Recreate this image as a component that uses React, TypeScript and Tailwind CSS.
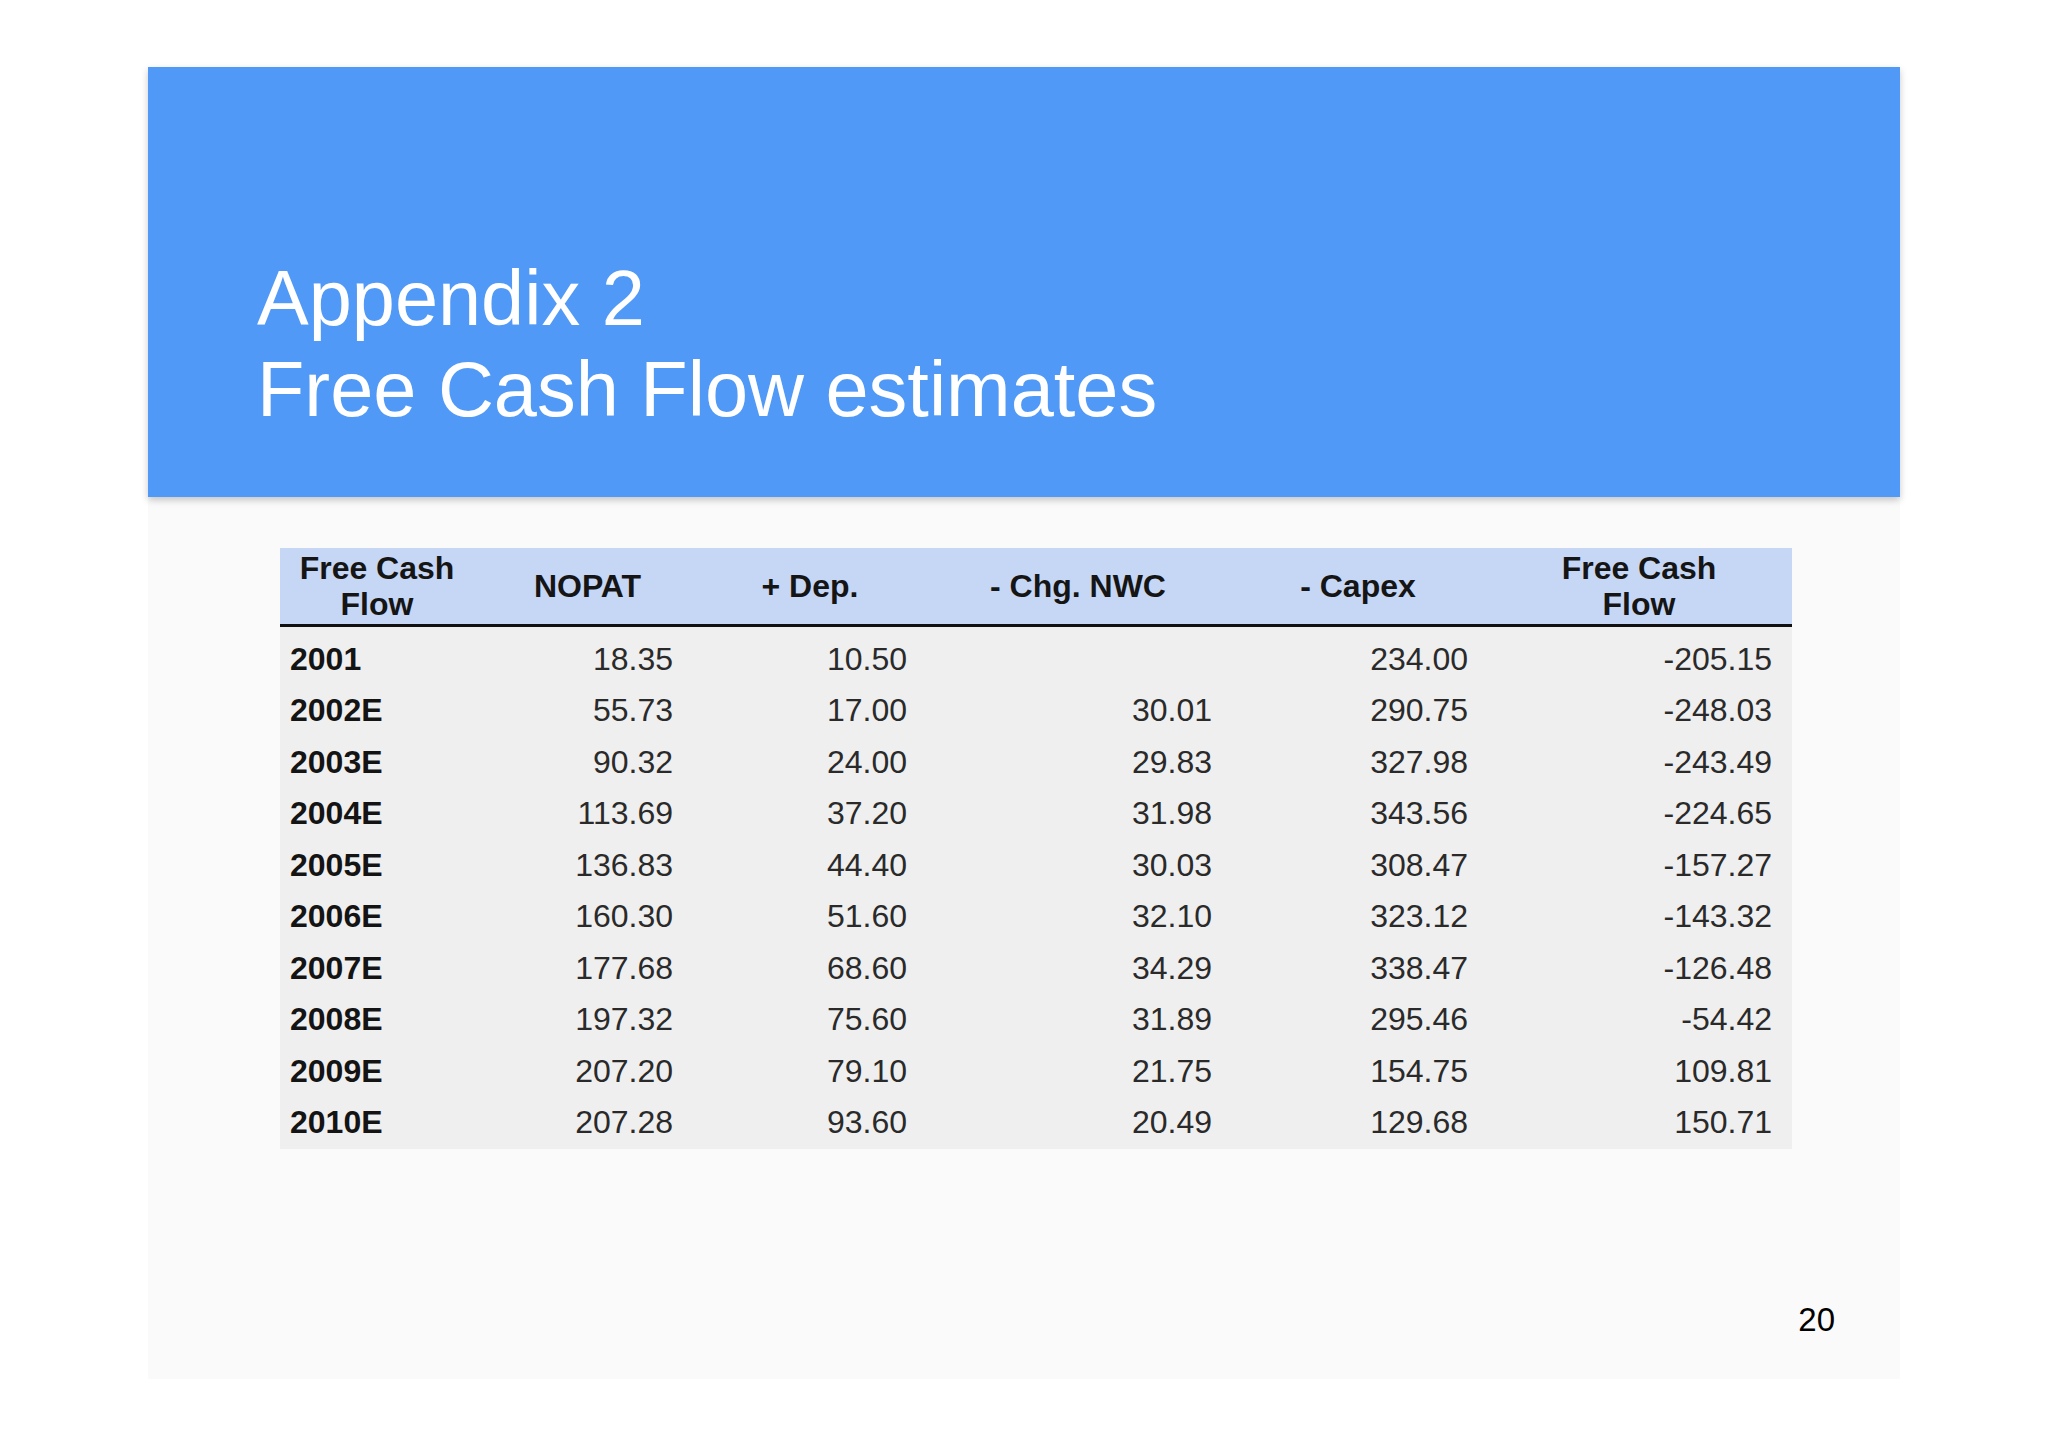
import React from "react";

type Row = [string, string, string, string, string, string];

const rows: Row[] = [
  ["2001", "18.35", "10.50", "", "234.00", "-205.15"],
  ["2002E", "55.73", "17.00", "30.01", "290.75", "-248.03"],
  ["2003E", "90.32", "24.00", "29.83", "327.98", "-243.49"],
  ["2004E", "113.69", "37.20", "31.98", "343.56", "-224.65"],
  ["2005E", "136.83", "44.40", "30.03", "308.47", "-157.27"],
  ["2006E", "160.30", "51.60", "32.10", "323.12", "-143.32"],
  ["2007E", "177.68", "68.60", "34.29", "338.47", "-126.48"],
  ["2008E", "197.32", "75.60", "31.89", "295.46", "-54.42"],
  ["2009E", "207.20", "79.10", "21.75", "154.75", "109.81"],
  ["2010E", "207.28", "93.60", "20.49", "129.68", "150.71"],
];

export default function App() {
  return (
    <div
      className="w-full h-[1447px] bg-white pt-[67px] pl-[148px]"
      style={{ fontFamily: '"Liberation Sans", Arial, sans-serif' }}
    >
      <div className="w-[1752px] h-[1312px] bg-[#fafafa] flex flex-col">
        {/* Blue title header */}
        <div className="h-[430px] shrink-0 bg-[#5099f6] pl-[109px] pt-[186px] shadow-[0_3px_7px_rgba(0,0,0,0.22)] relative z-10">
          <h1 className="text-white text-[77.5px] leading-[91.3px] font-normal">
            Appendix 2
            <br />
            Free Cash Flow estimates
          </h1>
        </div>

        {/* Table */}
        <div className="mt-[51px] ml-[132px] w-[1512px]">
          <div className="flex h-[76px] bg-[#c6d7f5] items-center text-[32px] leading-[36px] font-bold text-[#151515]">
            <div className="w-[194px] text-center">
              Free Cash
              <br />
              Flow
            </div>
            <div className="w-[227px] text-center">NOPAT</div>
            <div className="w-[218px] text-center">+ Dep.</div>
            <div className="w-[318px] text-center">- Chg. NWC</div>
            <div className="w-[242px] text-center">- Capex</div>
            <div className="w-[313px] text-center pl-[7px]">
              Free Cash
              <br />
              Flow
            </div>
          </div>
          <div className="h-[3px] bg-[#111111]" />
          <div className="bg-[#efefef] pt-[6px] pb-[1px]">
            {rows.map((r) => (
              <div
                key={r[0]}
                className="flex h-[51.5px] items-center text-[32px] leading-[36px] text-[#2a2a2a]"
              >
                <div className="w-[194px] pl-[10px] font-bold text-[#141414]">{r[0]}</div>
                <div className="w-[227px] pr-[28px] text-right">{r[1]}</div>
                <div className="w-[218px] pr-[12px] text-right">{r[2]}</div>
                <div className="w-[318px] pr-[25px] text-right">{r[3]}</div>
                <div className="w-[242px] pr-[11px] text-right">{r[4]}</div>
                <div className="w-[313px] pr-[20px] text-right">{r[5]}</div>
              </div>
            ))}
          </div>
        </div>

        {/* Page number */}
        <div className="mt-auto flex justify-end pr-[65px] pb-[43px]">
          <span className="text-[33px] leading-none text-black">20</span>
        </div>
      </div>
    </div>
  );
}
